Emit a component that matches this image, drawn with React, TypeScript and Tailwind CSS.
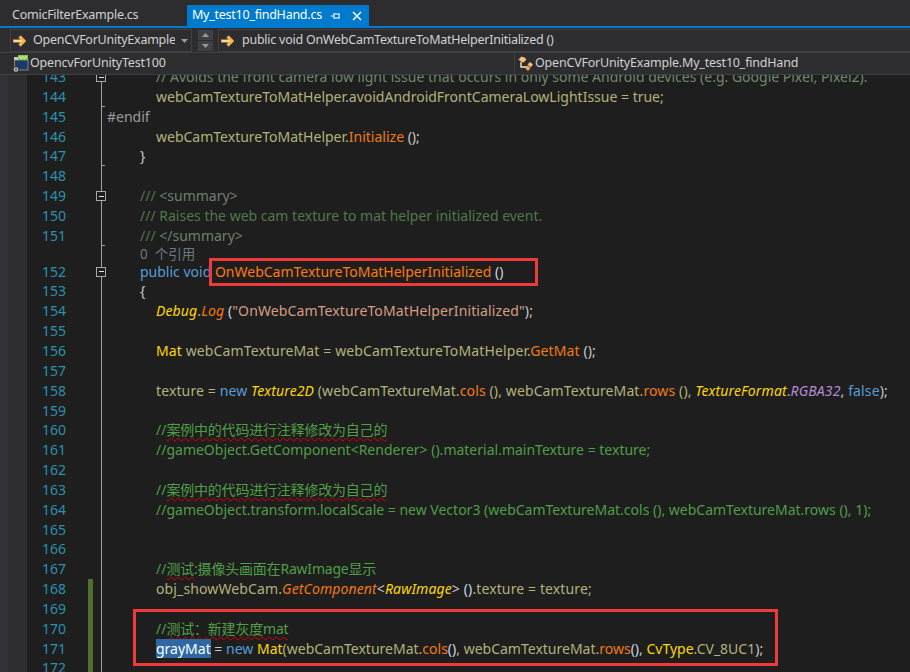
import React from "react"

type Tok = [string, string]

const C = {
  id: "text-[#b2b27a]",
  type: "text-[#ffd700]",
  typeI: "text-[#ffd700] italic",
  method: "text-[#f07a14]",
  methodI: "text-[#f07a14] italic",
  kw: "text-[#569cd6]",
  punc: "text-[#c8d8e8]",
  str: "text-[#d69d85]",
  cm: "text-[#4f9e45]",
  cjk: "text-[#4f9e45] tracking-[-0.2px]",
  sq: "text-[#4f9e45] tracking-[-0.2px] underline decoration-wavy decoration-[#d80000] decoration-1 underline-offset-2",
  doc: "text-[#50794a]",
  plain: "text-[#c8c8c8]",
  enumv: "text-[#b58bd6] italic",
}

type Row = { n: number; x: number; t?: Tok[]; fold?: boolean; change?: boolean; tick?: boolean; wide?: boolean }

const rows: Row[] = [
  { n: 143, x: 49, fold: true, t: [["// Avoids the front camera low light issue that occurs in only some Android devices (e.g. Google Pixel, Pixel2).", "text-[#6f8a6a]"]] },
  { n: 144, x: 49, t: [["webCamTextureToMatHelper.avoidAndroidFrontCameraLowLightIssue = true;", C.id]], tick: true },
  { n: 145, x: 0, t: [["#endif", "text-[#9b9b9b]"]] },
  { n: 146, x: 49, t: [["webCamTextureToMatHelper.", C.id], ["Initialize", C.method], [" ();", C.plain]] },
  { n: 147, x: 33, t: [["}", C.plain]], tick: true },
  { n: 148, x: 0 },
  { n: 149, x: 33, fold: true, t: [["/// ", C.doc], ["<summary>", "text-[#6f7f6c]"]] },
  { n: 150, x: 33, t: [["/// Raises the web cam texture to mat helper initialized event.", C.doc]] },
  { n: 151, x: 33, t: [["/// ", C.doc], ["</summary>", "text-[#6f7f6c]"]], tick: true },
  { n: 152, x: 33, fold: true, t: [["public void ", C.kw], ["OnWebCamTextureToMatHelperInitialized", "text-[#ff7a0a]"], [" ()", C.punc]] },
  { n: 153, x: 33, t: [["{", C.plain]] },
  { n: 154, x: 49, wide: true, t: [["Debug", C.typeI], [".", C.id], ["Log", C.methodI], [" (", C.punc], ['"OnWebCamTextureToMatHelperInitialized"', C.str], [");", C.plain]] },
  { n: 155, x: 0 },
  { n: 156, x: 49, wide: true, t: [["Mat", C.type], [" webCamTextureMat = webCamTextureToMatHelper.", C.id], ["GetMat", C.method], [" ();", C.plain]] },
  { n: 157, x: 0 },
  { n: 158, x: 49, wide: true, t: [["texture = ", C.id], ["new ", C.kw], ["Texture2D", C.typeI], [" (webCamTextureMat.", C.id], ["cols", C.method], [" (), webCamTextureMat.", C.id], ["rows", C.method], [" (), ", C.id], ["TextureFormat", C.typeI], [".", C.id], ["RGBA32", C.enumv], [", ", C.plain], ["false", C.kw], [");", C.plain]] },
  { n: 159, x: 0 },
  { n: 160, x: 49, t: [["//", C.cm], ["案例中的代码进行注释修改为自己的", C.sq]] },
  { n: 161, x: 49, t: [["//gameObject.GetComponent<Renderer> ().material.mainTexture = texture;", C.cm]] },
  { n: 162, x: 0 },
  { n: 163, x: 49, t: [["//", C.cm], ["案例中的代码进行注释修改为自己的", C.sq]] },
  { n: 164, x: 49, t: [["//gameObject.transform.localScale = new Vector3 (webCamTextureMat.cols (), webCamTextureMat.rows (), 1);", C.cm]] },
  { n: 165, x: 0 },
  { n: 166, x: 0 },
  { n: 167, x: 49, t: [["//", C.cm], ["测试", C.sq], [":摄像头画面在RawImage显示", C.cjk]] },
  { n: 168, x: 49, change: true, wide: true, t: [["obj_showWebCam.", C.id], ["GetComponent", C.methodI], ["<", C.plain], ["RawImage", C.typeI], [">", C.plain], [" ()", C.punc], [".texture = texture;", C.id]] },
  { n: 169, x: 0, change: true },
  { n: 170, x: 49, change: true, t: [["//", C.cm], ["测试：新建灰度mat", C.sq]] },
  { n: 171, x: 49, change: true, t: [["grayMat", "bg-[#2d68a5] text-white"], [" = ", C.plain], ["new ", C.kw], ["Mat", C.type], ["(webCamTextureMat.", C.id], ["cols", C.method], ["()", C.punc], [", webCamTextureMat.", C.id], ["rows", C.method], ["()", C.punc], [", ", C.plain], ["CvType", C.type], [".CV_8UC1", C.id], [");", C.plain]] },
  { n: 172, x: 0, change: true },
]

function ArrowIcon() {
  return (
    <svg width="14" height="14" viewBox="0 0 14 14" className="shrink-0">
      <path d="M0 7h10M6.5 2.5L11 7l-4.5 4.5" fill="none" stroke="#eeb04e" strokeWidth="3.2" />
      <path d="M1 7h8.5" fill="none" stroke="#fff8e8" strokeWidth="1.1" />
    </svg>
  )
}

function ProjectIcon() {
  return (
    <svg width="16" height="18" viewBox="0 0 16 18" className="shrink-0">
      <rect x="1.5" y="5" width="13.5" height="10" fill="#1c3a63" stroke="#9a9a9a" strokeWidth="0.8" />
      <rect x="1" y="2" width="4" height="3" fill="#c8c8c8" />
      <rect x="5" y="0" width="10" height="5" fill="#88c848" />
      <path d="M6 1h1.5v1.5H6zM9 1h1.5v1.5H9zM12 1h1.5v1.5H12zM7.5 2.5H9V4H7.5zM10.5 2.5H12V4h-1.5z" fill="#d8f0c0" />
      <circle cx="3" cy="14.5" r="2.8" fill="#c8c8c8" stroke="#2d2d30" />
      <circle cx="3" cy="14.5" r="1" fill="#2d2d30" />
    </svg>
  )
}

function ClassIcon() {
  return (
    <svg width="16" height="16" viewBox="0 0 16 16" className="shrink-0">
      <path d="M3 6V11H9" fill="none" stroke="#f6e2c2" strokeWidth="1.4" />
      <path d="M0.5 3.5L3.5 0.5l3 1 2 2-3 3-2-.5z" fill="#f2bd78" />
      <path d="M9.5 8.5l2.5-2.5 3 2.5-2.5 3z" fill="#f2bd78" />
      <path d="M7 12l2.5-2.5 3 2.5-2.5 3z" fill="#e8a458" />
    </svg>
  )
}

function PinIcon() {
  return (
    <svg width="10" height="10" viewBox="0 0 10 10">
      <path d="M0 5h3M3 2v6M3 3h6M3 7h6M8 3v4" stroke="#fff" strokeWidth="1" fill="none" />
    </svg>
  )
}

function CloseIcon() {
  return (
    <svg width="10" height="10" viewBox="0 0 10 10">
      <path d="M1 1l8 8M9 1l-8 8" stroke="#fff" strokeWidth="1.5" fill="none" />
    </svg>
  )
}

function Caret({ up }: { up?: boolean }) {
  return (
    <svg width="7" height="4" viewBox="0 0 7 4">
      <path d={up ? "M0 4h7L3.5 0z" : "M0 0h7L3.5 4z"} fill="#999" />
    </svg>
  )
}

function CodeRow({ row }: { row: Row }) {
  return (
    <div className="flex h-[19.85px] items-center leading-[19.85px]">
      <div className="w-[66px] shrink-0 text-right text-[#2b91af]">{row.n}</div>
      <div className="w-[22px] shrink-0" />
      <div className={`h-full w-[5px] shrink-0 ${row.change ? "bg-[#4f6f2f]" : ""}`} />
      <div className="relative h-full w-[14px] shrink-0">
        <div className="h-full w-[9px] border-r-[1.5px] border-[#a0a0a0]" />
        {row.tick && <div className="absolute bottom-0 left-[9px] h-px w-[3px] bg-[#a0a0a0]" />}
        {row.fold && (
          <div className="absolute left-[3px] top-[5px] flex h-[10px] w-[10px] items-center justify-center border-[1.5px] border-[#a8a8a8] bg-[#1e1e1e]">
            <div className="h-px w-[5px] bg-[#e0e0e0]" />
          </div>
        )}
      </div>
      <div className={`whitespace-pre ${row.wide ? "tracking-[0.12px]" : ""}`} style={{ marginLeft: row.x }}>
        {row.t?.map(([text, cls], i) => (
          <span key={i} className={cls}>
            {text}
          </span>
        ))}
      </div>
    </div>
  )
}

export default function App() {
  return (
    <div className="flex h-[672px] w-[910px] flex-col overflow-hidden bg-[#2d2d30] font-['Noto_Sans','Noto_Sans_CJK_SC',sans-serif] text-[14px] text-[#d0d0d0]">
      {/* Tabs */}
      <div className="flex h-[26px] shrink-0 items-end text-[12.5px] tracking-[-0.25px]">
        <div className="flex h-[21px] w-[187px] items-center pl-[12px]">ComicFilterExample.cs</div>
        <div className="flex h-[21px] w-[182px] items-center bg-[#007acc] pl-[5px] text-white">
          <span>My_test10_findHand.cs</span>
          <span className="ml-auto flex items-center gap-[11px] pr-[7px]">
            <PinIcon />
            <CloseIcon />
          </span>
        </div>
      </div>
      <div className="h-[2px] shrink-0 bg-[#007acc]" />

      {/* Navigation bars */}
      <div className="flex h-[25px] shrink-0 items-center gap-[1px] border-b border-[#3f3f46] pl-[10px] pt-[1px] text-[12.5px] tracking-[-0.25px]">
        <div className="flex h-[23px] w-[182px] items-center gap-[6px] border border-[#3f3f46] pl-[2px]">
          <ArrowIcon />
          <span className="w-[142px] overflow-hidden whitespace-nowrap">OpenCVForUnityExample</span>
          <Caret />
        </div>
        <div className="flex h-[23px] w-[24px] flex-col items-center justify-center gap-[1px]">
          <div className="flex h-[10px] w-[15px] items-center justify-center bg-[#3f3f46]">
            <Caret up />
          </div>
          <div className="flex h-[10px] w-[15px] items-center justify-center bg-[#3f3f46]">
            <Caret />
          </div>
        </div>
        <div className="flex h-[23px] flex-1 items-center gap-[7px] border-y border-l border-[#3f3f46] pl-[2px]">
          <ArrowIcon />
          <span>public void OnWebCamTextureToMatHelperInitialized ()</span>
        </div>
      </div>
      <div className="flex h-[22px] shrink-0 items-center border-b border-[#3f3f46] pl-[13px] text-[12.5px] tracking-[-0.2px]">
        <div className="flex w-[501px] items-center gap-[1px]">
          <ProjectIcon />
          <span>OpencvForUnityTest100</span>
        </div>
        <div className="ml-auto flex h-[22px] w-[396px] items-center gap-[1px] border-l border-[#3f3f46] pl-[3px]">
          <ClassIcon />
          <span>OpenCVForUnityExample.My_test10_findHand</span>
        </div>
      </div>

      {/* Editor */}
      <div className="relative flex-1 overflow-hidden bg-[#1e1e1e]">
        <div className="absolute inset-y-0 left-0 w-[27px] border-l-[8px] border-[#333337] bg-[#2d2d30]" />
        <div className="relative -mt-[8px]">
          {rows.map((row) => (
            <React.Fragment key={row.n}>
              {row.n === 152 && (
                <div className="flex h-[16px] items-center">
                  <div className="w-[93px] shrink-0" />
                  <div className="h-full w-[9px] border-r-[1.5px] border-[#a0a0a0]" />
                  <div className="ml-[38px] whitespace-pre text-[13.5px] leading-[16px] text-[#6a7a85]">0  个引用</div>
                </div>
              )}
              <CodeRow row={row} />
            </React.Fragment>
          ))}
        </div>
        {/* Red annotation boxes */}
        <div className="absolute left-[209px] top-[183px] h-[28px] w-[329px] border-[3px] border-[#f03a3a]" />
        <div className="absolute left-[133px] top-[534px] h-[57px] w-[645px] border-[3px] border-[#f03a3a]" />
      </div>
    </div>
  )
}
